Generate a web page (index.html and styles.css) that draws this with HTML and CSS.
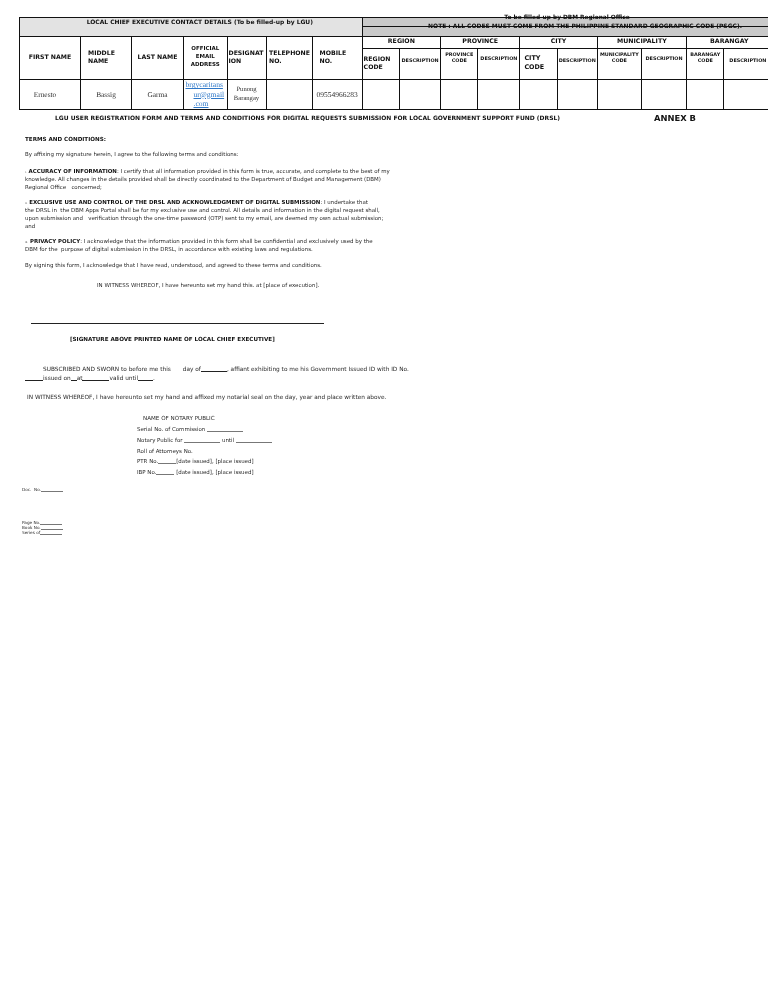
FILE: index.html
```html
<!DOCTYPE html>
<html lang="en">
<head>
<meta charset="utf-8">
<title>LGU User Registration Form - Annex B</title>
<link rel="stylesheet" href="styles.css">
</head>
<body>
<main class="page">
  <table class="grid">
    <colgroup>
      <col class="c61"><col class="c51"><col class="c52"><col class="c43"><col class="c39"><col class="c46"><col class="c50">
      <col class="c38"><col class="c41"><col class="c37"><col class="c42"><col class="c37"><col class="c40"><col class="c44"><col class="c45"><col class="c37"><col class="c48">
    </colgroup>
    <tr class="r1">
      <th colspan="7" rowspan="2" class="lead">LOCAL CHIEF EXECUTIVE CONTACT DETAILS (To be filled-up by LGU)</th>
      <th colspan="10" class="band onrule small">To be filled-up by DBM Regional Office</th>
    </tr>
    <tr class="r2">
      <th colspan="10" class="band onrule note">NOTE : ALL CODES MUST COME FROM THE PHILIPPINE STANDARD GEOGRAPHIC CODE (PSGC).</th>
    </tr>
    <tr class="r3">
      <th rowspan="2" class="h">FIRST NAME</th>
      <th rowspan="2" class="h left pad">MIDDLE NAME</th>
      <th rowspan="2" class="h">LAST NAME</th>
      <th rowspan="2" class="s">OFFICIAL<br>EMAIL<br>ADDRESS</th>
      <th rowspan="2" class="h left tight">DESIGNAT<br>ION</th>
      <th rowspan="2" class="h left phonehead">TELEPHONE<br>NO.</th>
      <th rowspan="2" class="h left pad">MOBILE<br>NO.</th>
      <th colspan="2" class="g">REGION</th>
      <th colspan="2" class="g">PROVINCE</th>
      <th colspan="2" class="g">CITY</th>
      <th colspan="2" class="g">MUNICIPALITY</th>
      <th colspan="2" class="g">BARANGAY</th>
    </tr>
    <tr class="r4">
      <th class="h left tight">REGION<br>CODE</th>
      <th class="d one low">DESCRIPTION</th>
      <th class="d up">PROVINCE<br>CODE</th>
      <th class="d one">DESCRIPTION</th>
      <th class="h left city">CITY<br>CODE</th>
      <th class="d one low">DESCRIPTION</th>
      <th class="d up">MUNICIPALITY<br>CODE</th>
      <th class="d one">DESCRIPTION</th>
      <th class="d up">BARANGAY<br>CODE</th>
      <th class="d one low">DESCRIPTION</th>
    </tr>
    <tr class="r5">
      <td class="v name first">Ernesto</td>
      <td class="v name">Bassig</td>
      <td class="v name">Garma</td>
      <td class="v mail"><a href="#">brgycaritans<br>ur@gmail<br>.com</a></td>
      <td class="v role">Punong<br>Barangay</td>
      <td class="v"></td>
      <td class="v phone">09554966283</td>
      <td></td><td></td><td></td><td></td><td></td><td></td><td></td><td></td><td></td><td></td>
    </tr>
  </table>

  <header class="heading">
    <h1 class="title">LGU USER REGISTRATION FORM AND TERMS AND CONDITIONS FOR DIGITAL REQUESTS SUBMISSION FOR LOCAL GOVERNMENT SUPPORT FUND (DRSL)</h1>
    <div class="annex">ANNEX B</div>
  </header>

  <section class="body">
    <h2 class="terms">TERMS AND CONDITIONS:</h2>
    <p class="p m7">By affixing my signature herein, I agree to the following terms and conditions:</p>
    <p class="p m8"><span class="mini">i.</span> <b>ACCURACY OF INFORMATION</b>: I certify that all information provided in this form is true, accurate, and complete to the best of my<br>knowledge. All changes in the details provided shall be directly coordinated to the Department of Budget and Management (DBM)<br>Regional Office &nbsp; concerned;</p>
    <p class="p m7"><span class="mini">ii.</span> <b>EXCLUSIVE USE AND CONTROL OF THE DRSL AND ACKNOWLEDGMENT OF DIGITAL SUBMISSION</b>: I undertake that<br>the DRSL in &nbsp;the DBM Apps Portal shall be for my exclusive use and control. All details and information in the digital request shall,<br>upon submission and &nbsp; verification through the one-time password (OTP) sent to my email, are deemed my own actual submission;<br>and</p>
    <p class="p m7"><span class="mini">iii.</span> <b>PRIVACY POLICY</b>: I acknowledge that the information provided in this form shall be confidential and exclusively used by the<br>DBM for the &nbsp;purpose of digital submission in the DRSL, in accordance with existing laws and regulations.</p>
    <p class="p m9">By signing this form, I acknowledge that I have read, understood, and agreed to these terms and conditions.</p>
    <p class="p witness">IN WITNESS WHEREOF, I have hereunto set my hand this. at [place of execution].</p>
    <div class="sigline"></div>
    <p class="p sigcap">[SIGNATURE ABOVE PRINTED NAME OF LOCAL CHIEF EXECUTIVE]</p>
    <p class="p sworn"><span class="indent">SUBSCRIBED AND SWORN to before me this<span class="gap"></span>day of<span class="blank w26"></span>, affiant exhibiting to me his Government Issued ID with ID No.</span><br><span class="blank w18"></span>issued on<span class="blank w6"></span>at<span class="blank w27"></span>valid until<span class="blank w15"></span>.</p>
    <p class="p seal">IN WITNESS WHEREOF, I have hereunto set my hand and affixed my notarial seal on the day, year and place written above.</p>
    <div class="notary">
      <div class="nname">NAME OF NOTARY PUBLIC</div>
      <div>Serial No. of Commission <span class="blank thin w36"></span></div>
      <div>Notary Public for <span class="blank thin w36"></span> until <span class="blank thin w36"></span></div>
      <div>Roll of Attorneys No.</div>
      <div>PTR No.<span class="blank thin w18"></span>[date issued], [place issued]</div>
      <div>IBP No.<span class="blank thin w18"></span> [date issued], [place issued]</div>
    </div>
    <div class="tiny doc">Doc. &nbsp;No.<span class="blank thin w22"></span></div>
    <div class="tiny book">
      <div>Page No.<span class="blank thin w22"></span></div>
      <div>Book No.<span class="blank thin w22"></span></div>
      <div>Series of<span class="blank thin w22"></span></div>
    </div>
  </section>
</main>
</body>
</html>
```

FILE: styles.css
```css
html, body {
  margin: 0;
  padding: 0;
  background: #fff;
  overflow: hidden;
}
body {
  width: 768px;
  height: 1006px;
}
.page {
  padding: 17px 0 0 19px;
  width: 760px;
  color: #111;
  font-family: "DejaVu Sans", sans-serif;
  text-rendering: geometricPrecision;
  filter: blur(0.35px);
}
.grid {
  border-collapse: collapse;
  table-layout: fixed;
  width: 751px;
  font-size: 6px;
  border: 1px solid #111;
}
.grid th, .grid td {
  border: 1px solid #111;
  padding: 0;
  text-align: center;
  vertical-align: middle;
  overflow: visible;
}
.c61 { width: 61px; }
.c51 { width: 51px; }
.c52 { width: 52px; }
.c43 { width: 43.5px; }
.c39 { width: 39px; }
.c46 { width: 46px; }
.c50 { width: 50px; }
.c38 { width: 37.5px; }
.c41 { width: 41px; }
.c37 { width: 37.3px; }
.c42 { width: 42px; }
.c40 { width: 40px; }
.c44 { width: 44.4px; }
.c45 { width: 45px; }
.c48 { width: 48px; }
.r1 { height: 9px; }
.r2 { height: 9.5px; }
.r3 { height: 12px; }
.r4 { height: 31.5px; }
.r5 { height: 30px; }
.grid .lead {
  background: #e3e3e3;
  vertical-align: top;
  font-size: 5.97px;
  line-height: 10px;
  padding-left: 18px;
}
.grid .band {
  background: #c9c9c9;
  font-size: 5.96px;
}
.grid .small { font-size: 5.83px; }
.grid .note { padding-left: 36px; }
.grid .onrule {
  vertical-align: top;
  line-height: 0;
  white-space: nowrap;
}
.grid .h {
  font-size: 6.2px;
  line-height: 7.4px;
}
.grid .left { text-align: left; }
.grid .pad { padding-left: 7px; }
.grid .tight { padding-left: 1px; }
.grid .phonehead { padding-left: 2.5px; }
.grid .city {
  font-size: 6.4px;
  line-height: 8.4px;
  padding-left: 4px;
  padding-bottom: 2px;
}
.grid .g {
  font-size: 6.25px;
  line-height: 8px;
}
.grid .s {
  font-size: 5.5px;
  line-height: 7.6px;
}
.grid .d {
  font-size: 4.9px;
  line-height: 6px;
  vertical-align: top;
}
.grid .up { padding-top: 3px; }
.grid .one { padding-top: 7px; }
.grid .low { padding-top: 9px; }
.grid .v {
  font-family: "Liberation Serif", serif;
  color: #333;
}
.grid .name { font-size: 7.4px; }
.grid .first { padding-right: 10px; }
.grid .mail {
  font-size: 7.6px;
  line-height: 9.5px;
  text-align: left;
  padding-left: 9.5px;
  text-indent: -8px;
}
.mail a {
  color: #2f78c8;
  display: block;
}
.grid .role {
  font-size: 6.6px;
  line-height: 8.6px;
}
.grid .phone { font-size: 7.5px; }
.heading {
  display: flex;
  align-items: center;
  height: 16px;
  padding-left: 36px;
}
.title {
  margin: 0;
  width: 599px;
  flex: none;
  font-size: 5.99px;
  font-weight: bold;
  white-space: nowrap;
}
.annex {
  font-size: 8.4px;
  font-weight: bold;
  white-space: nowrap;
}
.body {
  padding-left: 3px;
  font-size: 5.46px;
  line-height: 8px;
  color: #2a2a2a;
}
.terms {
  margin: 10px 0 0 3px;
  font-size: 5.6px;
  line-height: 8px;
  color: #111;
}
.p {
  margin: 0 0 0 3px;
  white-space: nowrap;
}
.p b { color: #111; }
.mini { font-size: 2.8px; }
.m7 { margin-top: 7px; }
.m8 { margin-top: 9px; }
.m9 { margin-top: 8.1px; }
.witness {
  margin-top: 12px;
  padding-left: 72px;
}
.sigline {
  margin: 33px 0 0 9px;
  width: 293px;
  height: 1px;
  background: #222;
}
.sigcap {
  margin: 11.5px 0 0 48px;
  font-weight: bold;
  font-size: 5.63px;
  color: #111;
}
.sworn {
  margin-top: 22.5px;
  line-height: 9px;
  font-size: 5.8px;
}
.indent { padding-left: 18px; }
.gap {
  display: inline-block;
  width: 12px;
}
.blank {
  display: inline-block;
  height: 0;
  border-bottom: 1px solid #222;
  vertical-align: -1px;
}
.thin { border-bottom-color: #777; }
.w26 { width: 26px; }
.w18 { width: 18px; }
.w22 { width: 22px; }
.w36 { width: 36px; }
.w6 { width: 6px; }
.w27 { width: 27px; }
.w15 { width: 15px; }
.seal {
  margin: 9.5px 0 0 5px;
  font-size: 5.8px;
}
.notary {
  margin-top: 12.5px;
  padding-left: 115px;
  line-height: 10.85px;
}
.nname {
  padding-left: 6px;
  font-size: 5.6px;
}
.tiny {
  font-size: 4.2px;
  white-space: nowrap;
}
.doc {
  margin-top: 7.5px;
  line-height: 5px;
}
.book {
  margin-top: 28px;
  line-height: 5.4px;
}
```
